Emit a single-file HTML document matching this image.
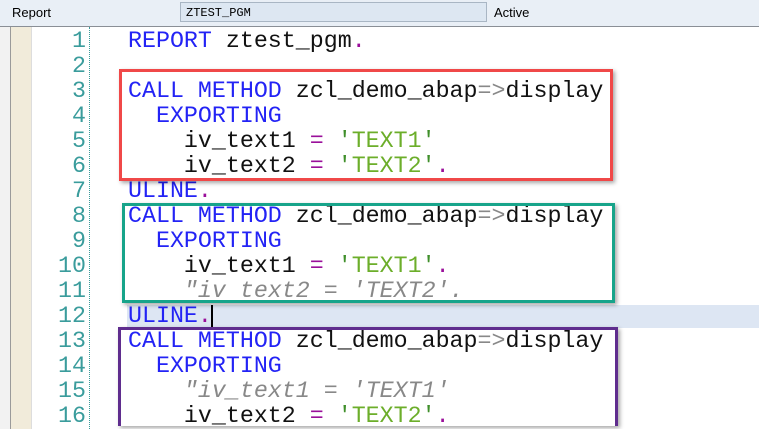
<!DOCTYPE html>
<html style="width:759px;height:429px;overflow:hidden"><head><style>
body{margin:0;width:759px;height:429px;overflow:hidden;background:#fff;position:relative;font-family:"Liberation Sans",sans-serif}
.hdr{position:absolute;left:0;top:0;width:759px;height:26px;background:#e9eff6;border-bottom:1px solid #8a8f96}
.lbl{position:absolute;top:5px;font-size:13px;color:#000}
.inp{position:absolute;left:180px;top:2px;width:307px;height:20px;background:#dde7f2;border:1px solid #a9b6c4;font-family:"Liberation Mono",monospace;font-size:12px;line-height:20px;padding-left:5px;box-sizing:border-box}
.g1{position:absolute;left:0;top:27px;width:10px;height:402px;background:#f2f2f2;border-right:1px solid #9a9a9a}
.g2{position:absolute;left:11px;top:27px;width:20px;height:402px;background:#f1ebda;border-right:1px solid #ddd}
.dot{position:absolute;left:89px;top:27px;height:402px;border-left:1px dotted #3a9a9a}
.hl{position:absolute;left:127px;top:305px;width:632px;height:23px;background:#dde6f3}
.cur{position:absolute;left:211px;top:305px;width:2px;height:23px;background:#000}
.ln{position:absolute;left:30px;width:56px;text-align:right;font-family:"Liberation Mono",monospace;font-size:23.3px;color:#3a9c9c;line-height:25px}
.c{position:absolute;left:128px;font-family:"Liberation Mono",monospace;font-size:23.3px;line-height:25px;white-space:pre;color:#111}
.k{color:#2323f5}.s{color:#6cae2a}.q{color:#3f8f2a}.o{color:#9a0f9a}.a{color:#888}.m{color:#888;font-style:italic}
.box{position:absolute;border:3px solid;box-shadow:2px 2px 4px rgba(0,0,0,.35)}
</style></head><body>
<div class="hdr"></div>
<div class="lbl" style="left:12px">Report</div>
<div class="inp">ZTEST_PGM</div>
<div class="lbl" style="left:494px">Active</div>
<div class="g1"></div><div class="g2"></div><div class="dot"></div>
<div class="hl"></div>
<div class="ln" style="top:29px">1</div>
<div class="ln" style="top:54px">2</div>
<div class="ln" style="top:79px">3</div>
<div class="ln" style="top:104px">4</div>
<div class="ln" style="top:129px">5</div>
<div class="ln" style="top:154px">6</div>
<div class="ln" style="top:179px">7</div>
<div class="ln" style="top:204px">8</div>
<div class="ln" style="top:229px">9</div>
<div class="ln" style="top:254px">10</div>
<div class="ln" style="top:279px">11</div>
<div class="ln" style="top:304px">12</div>
<div class="ln" style="top:329px">13</div>
<div class="ln" style="top:354px">14</div>
<div class="ln" style="top:379px">15</div>
<div class="ln" style="top:404px">16</div>
<div class="c" style="top:29px"><span class="k">REPORT</span> ztest_pgm<span class="o">.</span></div>
<div class="c" style="top:79px"><span class="k">CALL METHOD</span> zcl_demo_abap<span class="a">=&gt;</span>display</div>
<div class="c" style="top:104px">  <span class="k">EXPORTING</span></div>
<div class="c" style="top:129px">    iv_text1 <span class="o">=</span> <span class="q">'</span><span class="s">TEXT1</span><span class="q">'</span></div>
<div class="c" style="top:154px">    iv_text2 <span class="o">=</span> <span class="q">'</span><span class="s">TEXT2</span><span class="q">'</span><span class="o">.</span></div>
<div class="c" style="top:179px"><span class="k">ULINE</span><span class="o">.</span></div>
<div class="c" style="top:204px"><span class="k">CALL METHOD</span> zcl_demo_abap<span class="a">=&gt;</span>display</div>
<div class="c" style="top:229px">  <span class="k">EXPORTING</span></div>
<div class="c" style="top:254px">    iv_text1 <span class="o">=</span> <span class="q">'</span><span class="s">TEXT1</span><span class="q">'</span><span class="o">.</span></div>
<div class="c" style="top:279px">    <span class="m">"iv text2 = 'TEXT2'.</span></div>
<div class="c" style="top:304px"><span class="k">ULINE</span><span class="o">.</span></div>
<div class="c" style="top:329px"><span class="k">CALL METHOD</span> zcl_demo_abap<span class="a">=&gt;</span>display</div>
<div class="c" style="top:354px">  <span class="k">EXPORTING</span></div>
<div class="c" style="top:379px">    <span class="m">"iv_text1 = 'TEXT1'</span></div>
<div class="c" style="top:404px">    iv_text2 <span class="o">=</span> <span class="q">'</span><span class="s">TEXT2</span><span class="q">'</span><span class="o">.</span></div>
<div class="cur"></div>
<div class="box" style="left:119px;top:69px;width:488px;height:106px;border-color:#f04848"></div>
<div class="box" style="left:122px;top:203px;width:487px;height:94px;border-color:#17a48a"></div>
<div class="box" style="left:118px;top:327px;width:494px;height:96px;border-bottom:none;border-color:#5f2d8e"></div>
</body></html>
